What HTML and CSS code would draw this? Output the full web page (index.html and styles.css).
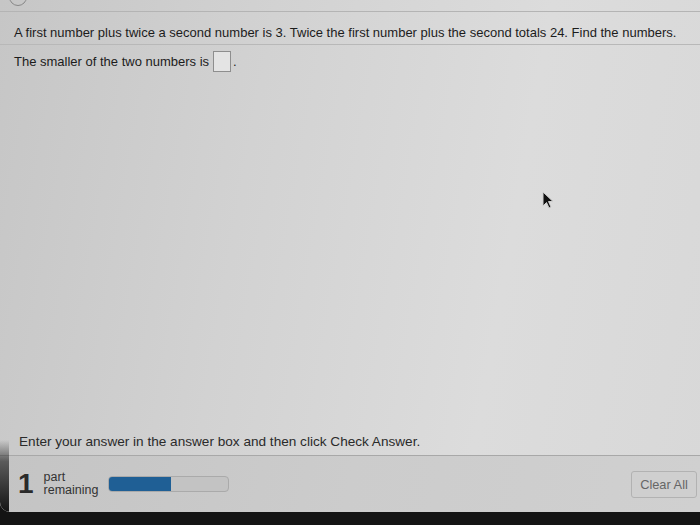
FILE: index.html
```html
<!DOCTYPE html>
<html>
<head>
<meta charset="utf-8">
<link rel="stylesheet" href="styles.css">
</head>
<body>
<div class="screen">
  <div class="topstrip"><span class="circle"></span></div>
  <div class="content">
    <div class="question">A first number plus twice a second number is 3. Twice the first number plus the second totals 24. Find the numbers.</div>
    <div class="answer-row">
      <span>The smaller of the two numbers is</span><span class="box"></span><span class="dot">.</span>
    </div>
    <div class="spacer"></div>
    <div class="hint">Enter your answer in the answer box and then click Check Answer.</div>
  </div>
  <div class="footer">
    <div class="parts">
      <span class="num">1</span>
      <span class="label"><span class="line">part</span><span class="line">remaining</span></span>
    </div>
    <div class="progress"><div class="fill"></div></div>
    <div class="grow"></div>
    <button class="clear">Clear All</button>
  </div>
  <svg class="cursor" width="14" height="20" viewBox="0 0 14 20"><path d="M1 1 L1 15 L4.5 11.5 L7 17 L9 16 L6.5 10.5 L11 10.5 Z" fill="#111" stroke="#cfcfcf" stroke-width="1"/></svg>
  <div class="shade"></div>
</div>
</body>
</html>
```
FILE: styles.css
```css
html, body {
  margin: 0;
  padding: 0;
  width: 700px;
  height: 525px;
  background: #141414;
  overflow: hidden;
}
.screen {
  position: relative;
  width: 700px;
  height: 512px;
  display: flex;
  flex-direction: column;
  background: linear-gradient(100deg, #c6c6c6 0%, #d2d2d2 35%, #dcdcdc 70%, #d8d8d8 100%);
  border-bottom-left-radius: 10px;
  font-family: "Liberation Sans", Arial, sans-serif;
  color: #1c1c1c;
  overflow: hidden;
}
.topstrip {
  height: 11px;
  border-bottom: 1px solid #b4b4b4;
  position: relative;
}
.circle {
  position: absolute;
  left: 9px;
  top: -12px;
  width: 16px;
  height: 16px;
  border: 1px solid #888;
  border-radius: 50%;
}
.content {
  flex: 1;
  display: flex;
  flex-direction: column;
}
.question {
  height: 32px;
  line-height: 41px;
  padding-left: 14px;
  font-size: 13px;
  border-bottom: 1px solid #b8b8b8;
  white-space: nowrap;
}
.answer-row {
  display: flex;
  align-items: center;
  padding-left: 14px;
  height: 33px;
  font-size: 13px;
}
.box {
  display: inline-block;
  width: 16px;
  height: 19px;
  border: 1px solid #8e8e8e;
  background: #e4e4e4;
  margin-left: 4px;
}
.dot {
  margin-left: 2px;
}
.spacer {
  flex: 1;
}
.hint {
  padding-left: 19px;
  font-size: 13.6px;
  color: #2a2a2a;
  height: 26px;
  line-height: 25px;
  border-bottom: 1px solid #a8a8a8;
}
.footer {
  height: 56px;
  display: flex;
  align-items: center;
  padding-left: 18px;
  padding-right: 3px;
  background: linear-gradient(100deg, #c4c4c4 0%, #cccccc 50%, #d0d0d0 100%);
}
.parts {
  display: flex;
  align-items: center;
  gap: 10px;
}
.num {
  font-size: 28px;
  font-weight: bold;
  color: #2a2a2a;
  line-height: 1;
}
.label {
  display: flex;
  flex-direction: column;
  font-size: 12.5px;
  color: #333;
}
.line {
  line-height: 13.5px;
  height: 13.5px;
}
.progress {
  margin-left: 10px;
  width: 119px;
  height: 14px;
  border: 1px solid #aaa;
  border-radius: 4px;
  background: #c3c3c3;
  overflow: hidden;
}
.fill {
  width: 62px;
  height: 100%;
  background: #1f5f95;
}
.grow {
  flex: 1;
}
.clear {
  width: 66px;
  height: 27px;
  border: 1px solid #b2b2b2;
  border-radius: 3px;
  background: #cfcfcf;
  font-family: "Liberation Sans", Arial, sans-serif;
  font-size: 12.8px;
  color: #666;
  padding: 0;
}
.cursor {
  position: absolute;
  left: 542px;
  top: 191px;
}
.shade {
  position: absolute;
  left: 0;
  top: 440px;
  width: 9px;
  height: 72px;
  background: linear-gradient(180deg, rgba(20,20,20,0) 0%, rgba(20,20,20,0.6) 30%, #141414 100%);
}
```
